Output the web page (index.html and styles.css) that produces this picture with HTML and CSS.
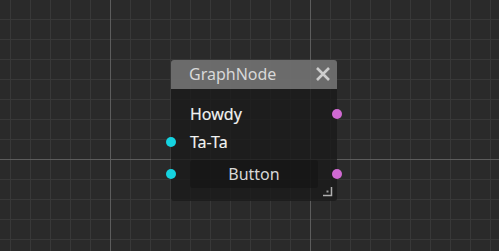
FILE: index.html
```html
<!DOCTYPE html>
<html>
<head>
<meta charset="utf-8">
<link rel="stylesheet" href="styles.css">
</head>
<body>
<div class="canvas">
  <div class="node">
    <div class="titlebar">
      <span class="title">GraphNode</span>
      <svg class="close" width="14" height="14" viewBox="0 0 14 14"><path d="M1 1 L13 13 M13 1 L1 13" stroke="#cdcdcd" stroke-width="2.6" stroke-linecap="butt" fill="none"/></svg>
    </div>
    <div class="content">
      <div class="row">
        <span class="label">Howdy</span>
        <span class="port port-right magenta"></span>
      </div>
      <div class="row">
        <span class="port port-left cyan"></span>
        <span class="label">Ta-Ta</span>
      </div>
      <div class="row row-button">
        <span class="port port-left cyan"></span>
        <div class="button">Button</div>
        <span class="port port-right magenta"></span>
      </div>
    </div>
    <svg class="resize" width="12" height="12" viewBox="0 0 12 12"><path d="M1 10.5 H9.5 V2" stroke="#b0b0b0" stroke-width="1.5" fill="none"/><rect x="4.5" y="5.5" width="2" height="2" fill="#9a9a9a"/></svg>
  </div>
</div>
</body>
</html>
```
FILE: styles.css
```css
html, body {
  margin: 0;
  padding: 0;
}
body {
  width: 499px;
  height: 251px;
  overflow: hidden;
  font-family: "Noto Sans", "Open Sans", sans-serif;
}
.canvas {
  position: relative;
  width: 499px;
  height: 251px;
  background-color: #2a2a2a;
  background-image:
    linear-gradient(to right, #5c5c5c 0, #5c5c5c 1px, transparent 1px),
    linear-gradient(to bottom, #5c5c5c 0, #5c5c5c 1px, transparent 1px),
    linear-gradient(to right, #383838 0, #383838 1px, transparent 1px),
    linear-gradient(to bottom, #383838 0, #383838 1px, transparent 1px);
  background-size: 200px 100%, 100% 200px, 20px 100%, 100% 20px;
  background-position: 110px 0, 0 159px, 10px 0, 0 19px;
}
.node {
  position: absolute;
  left: 171px;
  top: 60px;
  width: 166px;
  display: flex;
  flex-direction: column;
}
.titlebar {
  height: 29px;
  background: rgba(112, 112, 112, 0.93);
  border-radius: 3px 3px 0 0;
  display: flex;
  align-items: center;
  justify-content: space-between;
  padding: 0 7px 0 18px;
}
.title {
  color: #d8d8d8;
  font-size: 16px;
  line-height: 29px;
}
.close {
  display: block;
  margin-top: -1px;
}
.content {
  background: rgba(26, 26, 26, 0.8);
  padding: 11px 0 13px;
  display: flex;
  flex-direction: column;
  border-radius: 0 0 3px 3px;
}
.row {
  position: relative;
  height: 28px;
  display: flex;
  align-items: center;
  padding: 0 19px;
}
.row-button {
  margin-top: 4px;
}
.label {
  color: #f2f2f2;
  font-size: 16px;
  -webkit-text-stroke: 0.15px #f2f2f2;
}
.button {
  flex: 1;
  height: 28px;
  background: rgba(18, 18, 18, 0.55);
  color: #d8d8d8;
  font-size: 16px;
  display: flex;
  align-items: center;
  justify-content: center;
  border-radius: 3px;
}
.port {
  position: absolute;
  top: 50%;
  width: 10px;
  height: 10px;
  margin-top: -5px;
  border-radius: 50%;
}
.port-left { left: -5px; }
.port-right { right: -5px; }
.cyan { background: #15d3e0; }
.magenta { background: #d16ad3; }
.resize {
  position: absolute;
  right: 3px;
  bottom: 4px;
}
```
